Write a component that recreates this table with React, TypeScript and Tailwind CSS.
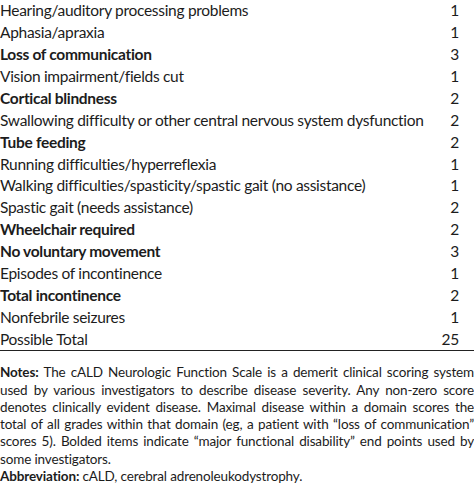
const rows: { label: string; score: string; bold?: boolean }[] = [
  { label: 'Hearing/auditory processing problems', score: '1' },
  { label: 'Aphasia/apraxia', score: '1' },
  { label: 'Loss of communication', score: '3', bold: true },
  { label: 'Vision impairment/fields cut', score: '1' },
  { label: 'Cortical blindness', score: '2', bold: true },
  { label: 'Swallowing difficulty or other central nervous system dysfunction', score: '2' },
  { label: 'Tube feeding', score: '2', bold: true },
  { label: 'Running difficulties/hyperreflexia', score: '1' },
  { label: 'Walking difficulties/spasticity/spastic gait (no assistance)', score: '1' },
  { label: 'Spastic gait (needs assistance)', score: '2' },
  { label: 'Wheelchair required', score: '2', bold: true },
  { label: 'No voluntary movement', score: '3', bold: true },
  { label: 'Episodes of incontinence', score: '1' },
  { label: 'Total incontinence', score: '2', bold: true },
  { label: 'Nonfebrile seizures', score: '1' },
  { label: 'Possible Total', score: '25' },
]

const noteLines = [
  'The cALD Neurologic Function Scale is a demerit clinical scoring system',
  'used by various investigators to describe disease severity. Any non-zero score',
  'denotes clinically evident disease. Maximal disease within a domain scores the',
  'total of all grades within that domain (eg, a patient with \u201closs of communication\u201d',
  'scores 5). Bolded items indicate \u201cmajor functional disability\u201d end points used by',
]

export default function App() {
  return (
    <div className="h-[484px] w-[474px] overflow-hidden bg-white text-[#1c1c1c] font-['Lato',sans-serif]">
      {/* Score table */}
      <div className="border-b-[1.5px] border-[#222]">
        {rows.map((row) => (
          <div
            key={row.label}
            className="flex h-[21.9px] items-center justify-between whitespace-nowrap pr-[15px] text-[15.5px] tracking-[-0.3px]"
          >
            <span className={row.bold ? 'font-bold' : ''}>{row.label}</span>
            <span>{row.score}</span>
          </div>
        ))}
      </div>

      {/* Notes */}
      <div className="mt-[13px] text-[13.5px] leading-[17.3px] tracking-[-0.15px]">
        {noteLines.map((line, i) => (
          <div key={i} className="whitespace-nowrap text-justify [text-align-last:justify]">
            {i === 0 && <span className="font-bold">Notes: </span>}
            {line}
          </div>
        ))}
        <div>some investigators.</div>
        <div>
          <span className="font-bold">Abbreviation:</span> cALD, cerebral adrenoleukodystrophy.
        </div>
      </div>
    </div>
  )
}
